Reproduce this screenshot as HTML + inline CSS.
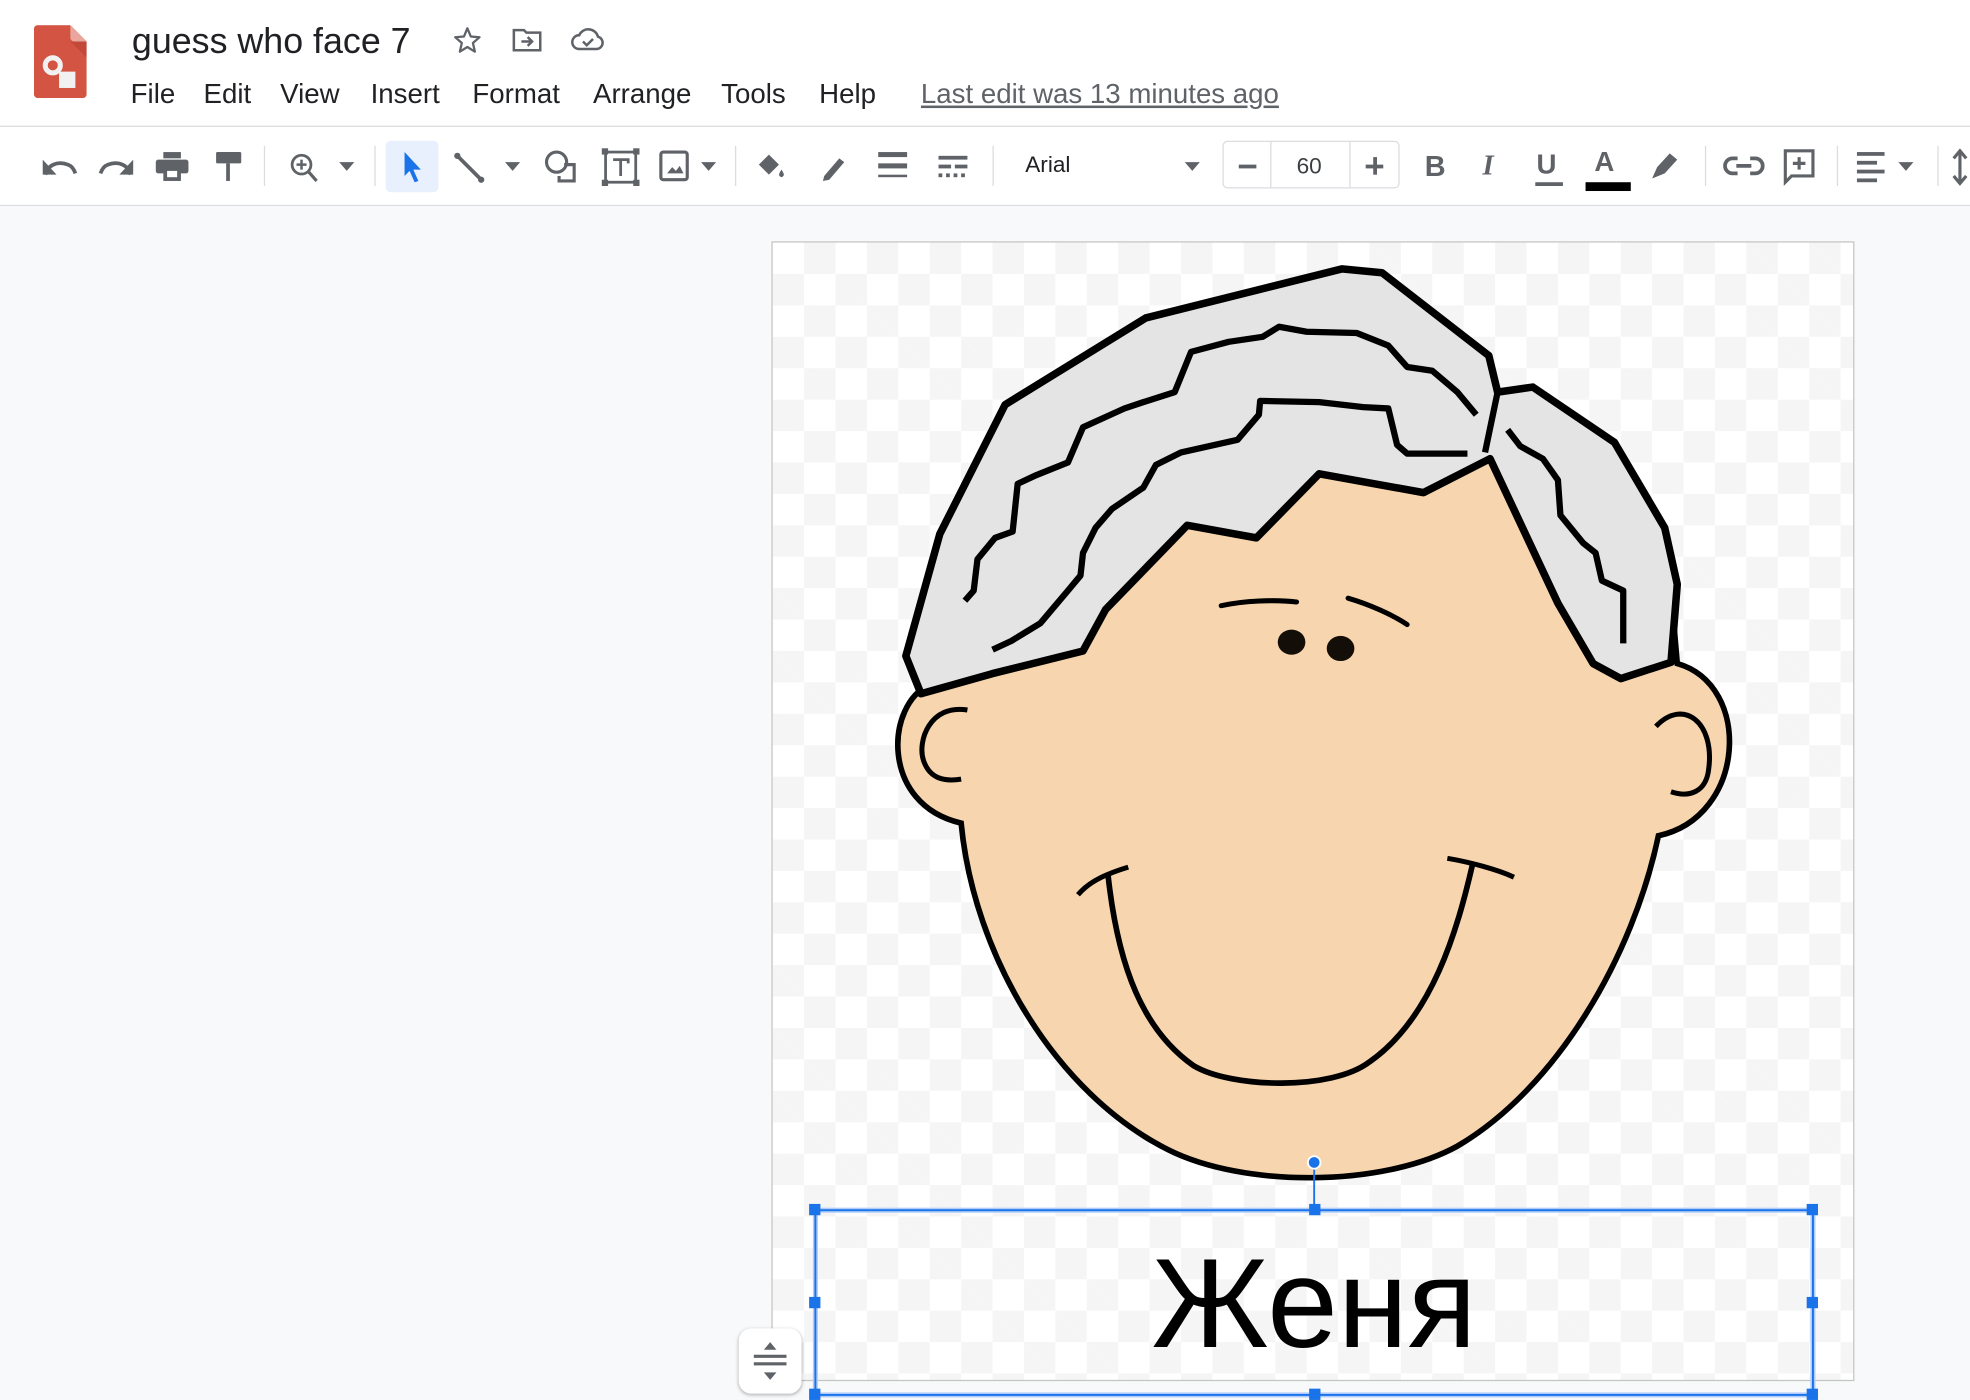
<!DOCTYPE html>
<html><head><meta charset="utf-8"><style>
html,body{margin:0;padding:0;width:1970px;height:1400px;overflow:hidden;background:#fff;}
#w{position:absolute;left:0;top:0;width:1568px;height:1114px;transform:scale(1.25638,1.2567);transform-origin:0 0;font-family:"Liberation Sans",Arial,sans-serif;}
.a{position:absolute;}
.menu span{position:absolute;top:0;font-size:22px;color:#202124;}
.sep{position:absolute;top:116px;width:1px;height:32px;background:#dadce0;}
.checker{background-color:#fff;background-image:linear-gradient(45deg,#f5f5f5 25%,transparent 25%,transparent 75%,#f5f5f5 75%),linear-gradient(45deg,#f5f5f5 25%,transparent 25%,transparent 75%,#f5f5f5 75%);background-size:50px 50px;background-position:0 0,25px 25px;}
.h{position:absolute;width:9px;height:9px;background:#1a73e8;}
</style></head><body><div id="w">
<svg class="a" style="left:27px;top:20px" width="42" height="58" viewBox="0 0 42 58">
<path d="M3 0H29L42 13V55a3 3 0 0 1-3 3H3a3 3 0 0 1-3-3V3a3 3 0 0 1 3-3z" fill="#d35443"/>
<path d="M29 0L42 13H32a3 3 0 0 1-3-3z" fill="#eaa59c"/>
<path d="M29 13L42 26V13z" fill="#b84236" opacity=".6"/>
<circle cx="15" cy="32" r="6" fill="none" stroke="#f1f1f1" stroke-width="4"/>
<rect x="20" y="37" width="13" height="13" fill="#f1f1f1"/>
</svg>
<div class="a" style="left:105px;top:17px;font-size:28.5px;color:#202124">guess who face 7</div>
<svg class="a" style="left:360px;top:20px" width="24" height="24" viewBox="0 0 24 24"><path d="M12 2.5l2.7 6.5 7 .6-5.3 4.6 1.6 6.9L12 17.4 6 21.1l1.6-6.9L2.3 9.6l7-.6z" fill="none" stroke="#5f6368" stroke-width="1.8" stroke-linejoin="round"/></svg>
<svg class="a" style="left:407px;top:21px" width="26" height="22" viewBox="0 0 26 22"><path d="M2 3h8l2 2h11v14H2z" fill="none" stroke="#5f6368" stroke-width="2"/><path d="M8 12h8M13 8.5l3.5 3.5-3.5 3.5" fill="none" stroke="#5f6368" stroke-width="2"/></svg>
<svg class="a" style="left:454px;top:21px" width="28" height="22" viewBox="0 0 28 22"><path d="M7 18h14a5 5 0 0 0 1-9.8A8 8 0 0 0 7 7a5.5 5.5 0 0 0 0 11z" fill="none" stroke="#5f6368" stroke-width="2"/><path d="M10 12l3 3 5-5" fill="none" stroke="#5f6368" stroke-width="2"/></svg>
<div class="menu a" style="left:0;top:62px;width:1100px;height:30px">
<span style="left:104px">File</span><span style="left:162px">Edit</span><span style="left:223px">View</span><span style="left:295px">Insert</span><span style="left:376px">Format</span><span style="left:472px">Arrange</span><span style="left:574px">Tools</span><span style="left:652px">Help</span>
<span style="left:733px;color:#5f6368;text-decoration:underline;font-size:22px">Last edit was 13 minutes ago</span>
</div>
<div class="a" style="left:0;top:100px;width:1568px;height:1px;background:#dadce0"></div>
<div class="a" style="left:0;top:163px;width:1568px;height:1px;background:#dadce0"></div>
<div class="a" style="left:0;top:164px;width:1568px;height:950px;background:#f8f9fa"></div>
<div class="a" style="left:307px;top:112px;width:42px;height:41px;background:#e8f0fe;border-radius:4px"></div>
<svg class="a" style="left:0;top:105px" width="1568" height="56" viewBox="0 105 1568 56" fill="#5f6368" stroke="none">
<path d="M36 139c2-8 10-11 18-8 3 1 5 4 6 7" fill="none" stroke="#5f6368" stroke-width="3"/><path d="M34 127v12h11z"/>
<path d="M104 139c-2-8-10-11-18-8-3 1-5 4-6 7" fill="none" stroke="#5f6368" stroke-width="3"/><path d="M106 127v12H95z"/>
<rect x="130" y="121" width="14" height="5"/><rect x="124" y="127" width="26" height="11" rx="2"/><rect x="130" y="134" width="14" height="10"/><rect x="133" y="136" width="8" height="5" fill="#fff"/>
<rect x="172" y="121" width="20" height="9" rx="1"/><rect x="180" y="130" width="3" height="14"/>
<circle cx="240" cy="131" r="7.5" fill="none" stroke="#5f6368" stroke-width="2.2"/><path d="M245 136l7 8" stroke="#5f6368" stroke-width="2.5"/><path d="M236 131h8M240 127v8" stroke="#5f6368" stroke-width="2"/>
<path d="M270 129h12l-6 7z"/>
<path d="M322 121l0 19 4-4 4 9 3-1-4-9h6z" fill="#1a73e8"/>
<path d="M364 124l19 19" stroke="#5f6368" stroke-width="3"/><circle cx="364" cy="124" r="2.5"/><circle cx="383" cy="143" r="2.5"/>
<path d="M402 129h12l-6 7z"/>
<circle cx="443" cy="129" r="8" fill="none" stroke="#5f6368" stroke-width="2.5"/><path d="M449 131h8v13h-12v-4" fill="none" stroke="#5f6368" stroke-width="2.5"/>
<rect x="482" y="121" width="24" height="24" fill="none" stroke="#5f6368" stroke-width="2.2"/><rect x="479" y="118" width="5" height="5"/><rect x="504" y="118" width="5" height="5"/><rect x="479" y="143" width="5" height="5"/><rect x="504" y="143" width="5" height="5"/><path d="M488 127h12v3M494 127v13" fill="none" stroke="#5f6368" stroke-width="2.2"/>
<rect x="526" y="121" width="21" height="22" rx="2" fill="none" stroke="#5f6368" stroke-width="2.5"/><path d="M531 138l4-5 3 3 3-4 3 6z"/>
<path d="M558 129h12l-6 7z"/>
<path d="M604 131l8-8 8 8-8 8z"/><path d="M622 135c-2 3-3 5 0 6 3-1 2-3 0-6z"/>
<path d="M656 140l12-14 4 3-12 14-5 1z"/>
<rect x="699" y="121" width="23" height="4"/><rect x="699" y="130" width="23" height="4"/><rect x="699" y="139" width="23" height="2"/>
<rect x="747" y="124" width="23" height="3"/><rect x="747" y="131" width="10" height="3"/><rect x="760" y="131" width="10" height="3"/><rect x="747" y="138" width="3" height="3"/><rect x="753" y="138" width="3" height="3"/><rect x="759" y="138" width="3" height="3"/><rect x="765" y="138" width="3" height="3"/>
<path d="M943 129h12l-6 7z"/>
<path d="M1511 129h12l-6 7z"/>
</svg>
<div class="sep" style="left:210px"></div><div class="sep" style="left:298px"></div><div class="sep" style="left:585px"></div><div class="sep" style="left:790px"></div><div class="sep" style="left:1357px"></div><div class="sep" style="left:1462px"></div><div class="sep" style="left:1542px"></div>
<div class="a" style="left:816px;top:121px;font-size:18px;color:#202124">Arial</div>
<div class="a" style="left:973px;top:112px;width:141px;height:38px;border:1px solid #dadce0;border-radius:4px;box-sizing:border-box"></div>
<div class="a" style="left:1011px;top:112px;width:1px;height:38px;background:#dadce0"></div>
<div class="a" style="left:1074px;top:112px;width:1px;height:38px;background:#dadce0"></div>
<div class="a" style="left:986px;top:131px;width:14px;height:2.5px;background:#5f6368"></div>
<div class="a" style="left:1032px;top:122px;font-size:18px;color:#3c4043">60</div>
<div class="a" style="left:1087px;top:131px;width:14px;height:2.5px;background:#5f6368"></div><div class="a" style="left:1093px;top:125px;width:2.5px;height:14px;background:#5f6368"></div>
<div class="a" style="left:1134px;top:119px;font-size:23px;font-weight:bold;color:#5f6368">B</div>
<div class="a" style="left:1180px;top:119px;font-size:23px;font-style:italic;font-family:'Liberation Serif',serif;font-weight:bold;color:#5f6368">I</div>
<div class="a" style="left:1223px;top:118px;font-size:22px;font-weight:bold;color:#5f6368">U</div><div class="a" style="left:1222px;top:145px;width:22px;height:2.5px;background:#5f6368"></div>
<div class="a" style="left:1269px;top:116px;font-size:22px;font-weight:bold;color:#5f6368">A</div><div class="a" style="left:1262px;top:145px;width:36px;height:7px;background:#000"></div>
<svg class="a" style="left:1310px;top:115px" width="32" height="32" viewBox="0 0 32 32"><path d="M5 27l4-9 10-11 6 5-10 11z" fill="#5f6368"/></svg>
<svg class="a" style="left:1371px;top:120px" width="34" height="24" viewBox="0 0 34 24"><path d="M12 6H8a6 6 0 0 0 0 12h4M22 6h4a6 6 0 0 1 0 12h-4M11 12h12" fill="none" stroke="#5f6368" stroke-width="3"/></svg>
<svg class="a" style="left:1418px;top:117px" width="30" height="32" viewBox="0 0 30 32"><path d="M3 3h22v20H8l-5 5z" fill="none" stroke="#5f6368" stroke-width="2.5"/><path d="M14 8v10M9 13h10" stroke="#5f6368" stroke-width="2.5"/></svg>
<div class="a" style="left:1478px;top:121px;width:22px;height:3px;background:#5f6368"></div><div class="a" style="left:1478px;top:128px;width:16px;height:3px;background:#5f6368"></div><div class="a" style="left:1478px;top:135px;width:22px;height:3px;background:#5f6368"></div><div class="a" style="left:1478px;top:142px;width:16px;height:3px;background:#5f6368"></div>
<svg class="a" style="left:1552px;top:117px" width="16" height="32" viewBox="0 0 16 32"><path d="M8 3v26M3 9l5-6 5 6M3 23l5 6 5-6" fill="none" stroke="#5f6368" stroke-width="2.5"/></svg>

<div class="a checker" style="left:614px;top:192px;width:862px;height:907px;border:1px solid #c4c4c4;box-sizing:border-box"></div>
<svg class="a" style="left:0;top:0" width="1568" height="1114" viewBox="0 0 1568 1114">
<path d="M740 545C705 560 700 640 765 655C775 760 840 870 930 915C990 945 1100 945 1160 912C1240 865 1300 760 1320 665C1390 650 1395 545 1335 528L1330 470L1300 390L1200 330L950 380L780 500Z" fill="#f7d5ae" stroke="#000" stroke-width="4.5"/>
<path d="M733 552L721 522L748 425L800 322L912 253L1068 214L1100 217L1185 283L1192 312L1220 308L1285 352L1325 420L1335 465L1330 527L1290 540L1268 528L1240 480L1186 365L1133 392L1050 377L1000 428L945 418L880 485L862 518L790 536Z" fill="#e4e4e4" stroke="#000" stroke-width="6" stroke-linejoin="round"/>
<path d="M1192 312L1182 360" stroke="#000" stroke-width="5"/>
<g fill="none" stroke="#000" stroke-width="5" stroke-linejoin="round">
<path d="M768 478L775 470L778 445L792 428L806 423L810 385L825 378L850 368L862 340L895 325L910 320L935 312L948 280L978 272L1005 268L1018 260L1040 264L1080 265L1105 275L1120 292L1140 295L1160 312L1175 330"/>
<path d="M790 517L805 510L828 496L850 470L860 458L862 440L872 420L885 405L910 388L920 370L940 360L985 350L1002 330L1003 319L1050 320L1085 324L1105 325L1112 354L1120 361L1168 361"/>
<path d="M1200 342L1210 355L1228 365L1240 382L1242 410L1260 432L1270 440L1275 462L1292 470L1292 512"/>
</g>
<path d="M972 482C990 478 1015 477 1032 479" stroke="#000" stroke-width="4" fill="none" stroke-linecap="round"/>
<path d="M1073 476C1090 481 1108 489 1120 497" stroke="#000" stroke-width="4" fill="none" stroke-linecap="round"/>
<ellipse cx="1028" cy="511" rx="11" ry="10" fill="#140e08"/><ellipse cx="1067" cy="516" rx="11" ry="10" fill="#140e08"/>
<path d="M770 565C740 560 730 590 735 605C740 620 752 622 765 620" fill="none" stroke="#000" stroke-width="4"/>
<path d="M1318 578C1340 555 1365 575 1360 612C1358 630 1345 635 1330 630" fill="none" stroke="#000" stroke-width="4"/>
<path d="M858 712C868 700 885 694 898 690" stroke="#000" stroke-width="4" fill="none"/>
<path d="M882 697C890 770 910 820 950 848C980 866 1060 868 1090 845C1140 810 1160 740 1172 688" fill="none" stroke="#000" stroke-width="4.5"/>
<path d="M1152 683C1170 686 1192 692 1205 698" stroke="#000" stroke-width="4" fill="none"/>
<line x1="1046" y1="926" x2="1046" y2="963" stroke="#1a73e8" stroke-width="1.5"/>
<circle cx="1046" cy="925" r="5" fill="#1a73e8" stroke="#fff" stroke-width="1.5"/>
<rect x="649" y="963" width="794" height="147" fill="none" stroke="#aecbfa" stroke-width="4"/>
<rect x="649" y="963" width="794" height="147" fill="none" stroke="#1a73e8" stroke-width="1.5"/>
</svg>
<div class="h" style="left:644px;top:958px"></div><div class="h" style="left:1042px;top:958px"></div><div class="h" style="left:1438px;top:958px"></div>
<div class="h" style="left:644px;top:1032px"></div><div class="h" style="left:1438px;top:1032px"></div>
<div class="h" style="left:644px;top:1105px"></div><div class="h" style="left:1042px;top:1105px"></div><div class="h" style="left:1438px;top:1105px"></div>
<div class="a" style="left:650px;top:978px;width:792px;text-align:center;font-size:101px;color:#000;line-height:1.2">Женя</div>
<div class="a" style="left:588px;top:1057px;width:50px;height:52px;background:#fff;border-radius:10px;box-shadow:0 1px 3px rgba(0,0,0,.3)"></div>
<svg class="a" style="left:598px;top:1066px" width="30" height="34" viewBox="0 0 30 34"><path d="M15 2l5 6H10z" fill="#5f6368"/><rect x="2" y="12" width="26" height="2.5" fill="#5f6368"/><rect x="2" y="18" width="26" height="2.5" fill="#5f6368"/><path d="M15 32l5-6H10z" fill="#5f6368"/></svg>
</div></body></html>
